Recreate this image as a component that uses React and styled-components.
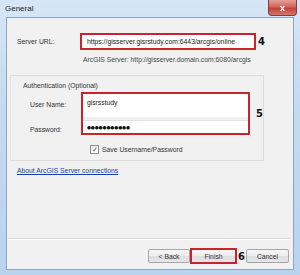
import React from 'react';
import styled, { createGlobalStyle } from 'styled-components';

const Global = createGlobalStyle`
  html, body { margin: 0; padding: 0; }
  body {
    width: 300px;
    height: 275px;
    overflow: hidden;
    font-family: "Liberation Sans", Arial, sans-serif;
    font-size: 6.8px;
    color: #333;
  }
`;

const Window = styled.div`
  width: 300px;
  height: 275px;
  box-sizing: border-box;
  display: flex;
  flex-direction: column;
  background: linear-gradient(180deg, #d6e6f6 0%, #c4daf0 40%, #b9d3ee 100%);
  padding: 0 6px 5px 6px;
`;

const TitleBar = styled.div`
  height: 17px;
  display: flex;
  align-items: center;
  justify-content: space-between;
  margin: 0 -6px;
  padding-left: 5px;
  font-size: 8px;
  color: #1e1e1e;
`;

const CloseButton = styled.div`
  width: 29px;
  height: 16px;
  margin-right: 3px;
  align-self: flex-start;
  border: 1px solid #8a3a3a;
  border-top: none;
  border-radius: 0 0 4px 4px;
  background: linear-gradient(180deg, #e2a097 0%, #d0645a 45%, #c2413a 55%, #d8766c 100%);
  color: #fff;
  font-size: 9px;
  font-weight: bold;
  display: flex;
  align-items: center;
  justify-content: center;
  box-sizing: border-box;
`;

const Body = styled.div`
  flex: 1;
  background: #f1f1f1;
  border: 1px solid #8fa6c0;
  display: flex;
  flex-direction: column;
  padding: 15px 0 0 0;
  box-sizing: border-box;
`;

const Row = styled.div`
  display: flex;
  align-items: center;
`;

const Label = styled.div`
  width: ${p => p.w}px;
  padding-left: ${p => p.left}px;
  box-sizing: border-box;
  flex-shrink: 0;
  color: #333;
`;

const RedBox = styled.div`
  border: 2px solid #c8242d;
  background: #fff;
  box-sizing: border-box;
  width: ${p => p.w}px;
  height: ${p => p.h}px;
  display: flex;
  align-items: center;
  padding-left: ${p => p.pad || 0}px;
  color: #222;
`;

const Marker = styled.div`
  font-weight: bold;
  font-size: 10px;
  color: #111;
  font-family: "DejaVu Sans", "Liberation Sans", sans-serif;
  margin-left: ${p => p.left}px;
  margin-right: ${p => p.right || 0}px;
`;

const Hint = styled.div`
  padding-left: 76px;
  margin-top: 6px;
  color: #444;
`;

const Group = styled.div`
  margin: 12px 0 0 3px;
  width: 254px;
  height: 86px;
  box-sizing: border-box;
  border: 1px solid #dcdcdc;
  border-left-color: #e2e2e2;
  display: flex;
  flex-direction: column;
  padding: 6px 0 0 12px;
`;

const GroupTitle = styled.div`
  color: #333;
`;

const Fields = styled.div`
  display: flex;
  align-items: center;
  margin-top: 3px;
`;

const LabelCol = styled.div`
  display: flex;
  flex-direction: column;
  width: 60px;
  padding-left: 7px;
  box-sizing: border-box;
  height: 42px;
  justify-content: space-between;
  padding-top: 8px;
  padding-bottom: 2px;
`;

const FieldBox = styled.div`
  width: 176px;
  height: 43px;
  border: 2px solid #c8242d;
  box-sizing: border-box;
  display: flex;
  flex-direction: column;
  background: #fff;
`;

const Field = styled.div`
  height: ${p => p.h}px;
  background: #fff;
  display: flex;
  align-items: ${p => (p.top ? 'flex-start' : 'center')};
  padding: ${p => (p.top ? '5px' : '0')} 0 0 4px;
  box-sizing: border-box;
  color: #222;
`;

const Gap = styled.div`
  height: 3px;
  background: #f1f1f1;
  border-bottom: 1px solid #e0e0e0;
`;

const Dots = styled.span`
  font-size: 4.6px;
  letter-spacing: -0.1px;
  color: #111;
  font-family: "DejaVu Sans", sans-serif;
`;

const CheckRow = styled.div`
  display: flex;
  align-items: center;
  margin: 10px 0 0 67px;
  gap: 3px;
`;

const Check = styled.div`
  width: 7px;
  height: 7px;
  border: 1px solid #8e8f8f;
  background: linear-gradient(135deg, #e8e8e8, #fff);
  font-size: 7px;
  line-height: 7px;
  text-align: center;
  color: #3c4f6a;
`;

const Link = styled.a`
  color: #1a3ea8;
  text-decoration: underline;
  margin: 6px 0 0 10px;
  align-self: flex-start;
`;

const Spacer = styled.div`
  flex: 1;
`;

const Separator = styled.div`
  margin: 0 4px 0 1px;
  border-top: 1px solid #d5d5d5;
  border-bottom: 1px solid #fff;
`;

const Footer = styled.div`
  display: flex;
  justify-content: flex-end;
  align-items: center;
  padding: 8px 4px 5px 0;
`;

const Button = styled.div`
  width: ${p => p.w}px;
  height: ${p => p.h || 14}px;
  box-sizing: border-box;
  border: ${p => (p.red ? '2px solid #c8242d' : '1px solid #a7a7a7')};
  border-radius: ${p => (p.red ? 0 : 2)}px;
  background: linear-gradient(180deg, #f6f6f6 0%, #ececec 50%, #dedede 51%, #e6e6e6 100%);
  display: flex;
  align-items: center;
  justify-content: center;
  color: #333;
`;

export default function App() {
  return (
    <>
      <Global />
      <Window>
        <TitleBar>
          <span>General</span>
          <CloseButton>x</CloseButton>
        </TitleBar>
        <Body>
          <Row>
            <Label w={73} left={10}>Server URL:</Label>
            <RedBox w={176} h={17} pad={5}>https://gisserver.gisrstudy.com:6443/arcgis/online</RedBox>
            <Marker left={2}>4</Marker>
          </Row>
          <Hint>ArcGIS Server: http://gisserver.domain.com:6080/arcgis</Hint>
          <Group>
            <GroupTitle>Authentication (Optional)</GroupTitle>
            <Fields>
              <LabelCol>
                <span>User Name:</span>
                <span>Password:</span>
              </LabelCol>
              <FieldBox>
                <Field h={24} top>gisrsstudy</Field>
                <Gap />
                <Field h={12}>
                  <Dots>●●●●●●●●●●●</Dots>
                </Field>
              </FieldBox>
              <Marker left={6}>5</Marker>
            </Fields>
            <CheckRow>
              <Check>✓</Check>
              <span>Save Username/Password</span>
            </CheckRow>
          </Group>
          <Link>About ArcGIS Server connections</Link>
          <Spacer />
          <Separator />
          <Footer>
            <Button w={42}>&lt; Back</Button>
            <Button w={47} h={16} red>Finish</Button>
            <Marker left={1} right={1}>6</Marker>
            <Button w={43}>Cancel</Button>
          </Footer>
        </Body>
      </Window>
    </>
  );
}
